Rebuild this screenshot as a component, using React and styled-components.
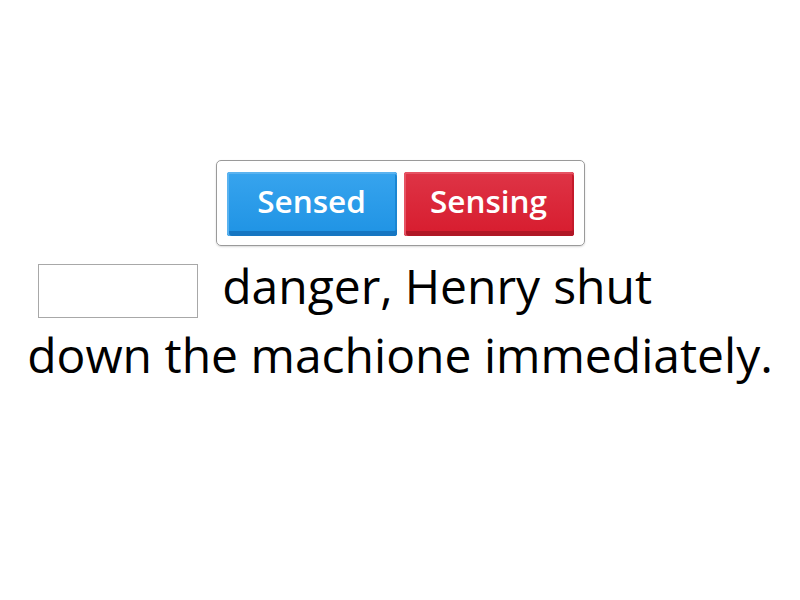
import React from "react";
import styled, { createGlobalStyle } from "styled-components";

const Global = createGlobalStyle`
  html, body { margin: 0; padding: 0; background: #fff; }
  body { font-family: "Open Sans", "Liberation Sans", sans-serif; color: #000; }
`;

const Page = styled.div`
  width: 800px;
  height: 600px;
  display: flex;
  flex-direction: column;
  align-items: center;
  padding-top: 160px;
  box-sizing: border-box;
`;

const Tray = styled.div`
  display: flex;
  gap: 7px;
  padding: 11px 10px 9px 10px;
  border: 1px solid #9a9a9a;
  border-radius: 5px;
  box-shadow: 0 1px 2px rgba(0, 0, 0, 0.15);
`;

const Choice = styled.div`
  width: 170px;
  height: 64px;
  box-sizing: border-box;
  display: flex;
  align-items: center;
  justify-content: center;
  border-radius: 3px;
  color: #fff;
  font-weight: 600;
  font-size: 31.5px;
  padding-bottom: 8px;
  background: linear-gradient(${(p) => p.$top}, ${(p) => p.$bg});
  box-shadow: inset 0 2px 0 ${(p) => p.$light}, inset 2px 0 0 ${(p) => p.$light},
    inset 0 -5px 0 ${(p) => p.$dark}, inset -2px 0 0 ${(p) => p.$mid};
`;

const Sentence = styled.div`
  margin-top: 5px;
  display: flex;
  flex-direction: column;
  font-size: 48px;
  line-height: 69px;
`;

const Line = styled.div`
  display: flex;
  align-items: flex-start;
  white-space: pre;
`;

const Blank = styled.span`
  display: inline-block;
  width: 160px;
  height: 54px;
  box-sizing: border-box;
  border: 1px solid #a8a8a8;
  margin: 13px 24px 0 11px;
`;

const Word = styled.span`
  margin-right: ${(p) => p.$gap || 0}px;
`;

export default function App() {
  return (
    <>
      <Global />
      <Page>
        <Tray>
          <Choice $top="#37a4ee" $bg="#1f93e4" $light="#5ab3f0" $mid="#1a86d2" $dark="#1676c2">Sensed</Choice>
          <Choice $top="#de3446" $bg="#d71c2e" $light="#e65363" $mid="#c41a2b" $dark="#b01726">Sensing</Choice>
        </Tray>
        <Sentence>
          <Line>
            <Blank />
            <Word $gap={12}>danger,</Word>
            <Word $gap={13}>Henry</Word>
            <Word>shut</Word>
          </Line>
          <Line>
            <Word>down the machione immediately.</Word>
          </Line>
        </Sentence>
      </Page>
    </>
  );
}
